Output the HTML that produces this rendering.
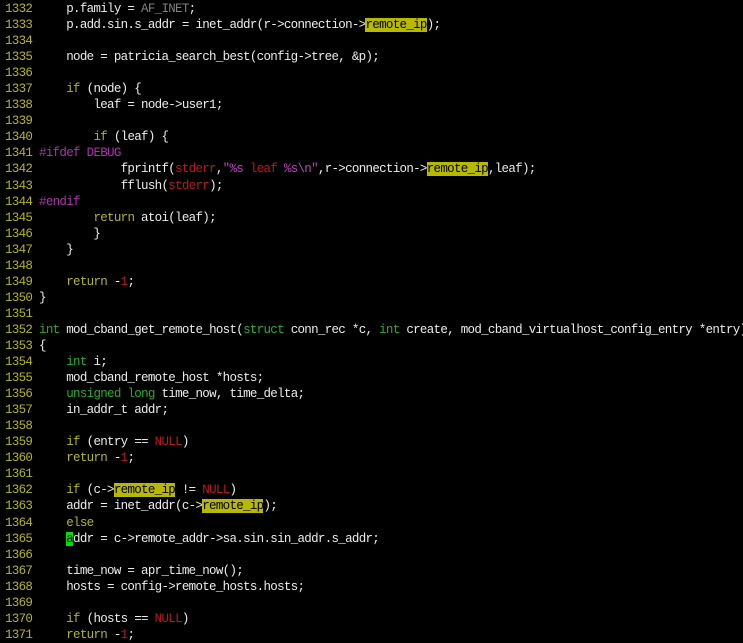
<!DOCTYPE html>
<html><head><meta charset="utf-8"><style>
html,body{margin:0;padding:0;background:#000;width:743px;height:643px;overflow:hidden}
pre{margin:0;padding:1px 0 0 5px;font-family:"Liberation Mono","DejaVu Sans Mono",monospace;font-size:12.5px;letter-spacing:-0.7px;line-height:16.05px;color:#ececec;white-space:pre}
.n{color:#b5b51a}
.k{color:#b5b51a}
.t{color:#22b022}
.p{color:#b030b0}
.s{color:#c040c0}
.r{color:#c01818}
.g{color:#808080}
.h{background:#b8b800;color:#000}
.c{background:#00e000;color:#000}
</style></head><body><pre>
<span class="n">1332</span>     p.family = <span class="g">AF_INET</span>;
<span class="n">1333</span>     p.add.sin.s_addr = inet_addr(r-&gt;connection-&gt;<span class="h">remote_ip</span>);
<span class="n">1334</span>
<span class="n">1335</span>     node = patricia_search_best(config-&gt;tree, &amp;p);
<span class="n">1336</span>
<span class="n">1337</span>     <span class="k">if</span> (node) {
<span class="n">1338</span>         leaf = node-&gt;user1;
<span class="n">1339</span>
<span class="n">1340</span>         <span class="k">if</span> (leaf) {
<span class="n">1341</span> <span class="p">#ifdef DEBUG</span>
<span class="n">1342</span>             fprintf(<span class="r">stderr</span>,<span class="s">"%s</span><span class="r"> leaf </span><span class="s">%s\n"</span>,r-&gt;connection-&gt;<span class="h">remote_ip</span>,leaf);
<span class="n">1343</span>             fflush(<span class="r">stderr</span>);
<span class="n">1344</span> <span class="p">#endif</span>
<span class="n">1345</span>         <span class="k">return</span> atoi(leaf);
<span class="n">1346</span>         }
<span class="n">1347</span>     }
<span class="n">1348</span>
<span class="n">1349</span>     <span class="k">return</span> -<span class="r">1</span>;
<span class="n">1350</span> }
<span class="n">1351</span>
<span class="n">1352</span> <span class="t">int</span> mod_cband_get_remote_host(<span class="t">struct</span> conn_rec *c, <span class="t">int</span> create, mod_cband_virtualhost_config_entry *entry)
<span class="n">1353</span> {
<span class="n">1354</span>     <span class="t">int</span> i;
<span class="n">1355</span>     mod_cband_remote_host *hosts;
<span class="n">1356</span>     <span class="t">unsigned</span> <span class="t">long</span> time_now, time_delta;
<span class="n">1357</span>     in_addr_t addr;
<span class="n">1358</span>
<span class="n">1359</span>     <span class="k">if</span> (entry == <span class="r">NULL</span>)
<span class="n">1360</span>     <span class="k">return</span> -<span class="r">1</span>;
<span class="n">1361</span>
<span class="n">1362</span>     <span class="k">if</span> (c-&gt;<span class="h">remote_ip</span> != <span class="r">NULL</span>)
<span class="n">1363</span>     addr = inet_addr(c-&gt;<span class="h">remote_ip</span>);
<span class="n">1364</span>     <span class="k">else</span>
<span class="n">1365</span>     <span class="c">a</span>ddr = c-&gt;remote_addr-&gt;sa.sin.sin_addr.s_addr;
<span class="n">1366</span>
<span class="n">1367</span>     time_now = apr_time_now();
<span class="n">1368</span>     hosts = config-&gt;remote_hosts.hosts;
<span class="n">1369</span>
<span class="n">1370</span>     <span class="k">if</span> (hosts == <span class="r">NULL</span>)
<span class="n">1371</span>     <span class="k">return</span> -<span class="r">1</span>;
</pre></body></html>
